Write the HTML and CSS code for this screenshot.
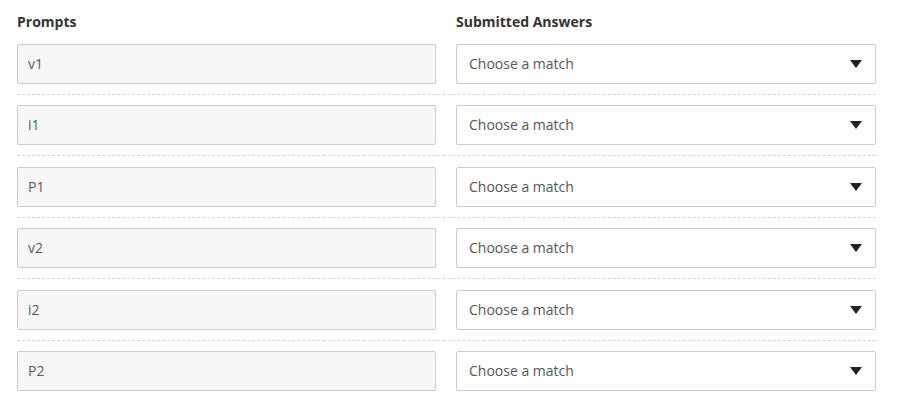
FILE: index.html
```html
<!DOCTYPE html>
<html>
<head>
<meta charset="utf-8">
<link rel="stylesheet" href="styles.css">
</head>
<body>
<div class="match">
  <div class="head">
    <div class="col-title">Prompts</div>
    <div class="col-title">Submitted Answers</div>
  </div>
  <div class="row"><div class="prompt">v1</div><div class="answer"><span>Choose a match</span><svg class="caret" width="12" height="8" viewBox="0 0 12 8"><path d="M0 0H12L6 8Z"/></svg></div></div>
  <div class="row"><div class="prompt">i1</div><div class="answer"><span>Choose a match</span><svg class="caret" width="12" height="8" viewBox="0 0 12 8"><path d="M0 0H12L6 8Z"/></svg></div></div>
  <div class="row"><div class="prompt">P1</div><div class="answer"><span>Choose a match</span><svg class="caret" width="12" height="8" viewBox="0 0 12 8"><path d="M0 0H12L6 8Z"/></svg></div></div>
  <div class="row"><div class="prompt">v2</div><div class="answer"><span>Choose a match</span><svg class="caret" width="12" height="8" viewBox="0 0 12 8"><path d="M0 0H12L6 8Z"/></svg></div></div>
  <div class="row"><div class="prompt">i2</div><div class="answer"><span>Choose a match</span><svg class="caret" width="12" height="8" viewBox="0 0 12 8"><path d="M0 0H12L6 8Z"/></svg></div></div>
  <div class="row last"><div class="prompt">P2</div><div class="answer"><span>Choose a match</span><svg class="caret" width="12" height="8" viewBox="0 0 12 8"><path d="M0 0H12L6 8Z"/></svg></div></div>
</div>
</body>
</html>
```
FILE: styles.css
```css
html, body {
  margin: 0;
  padding: 0;
  background: #fff;
}
body {
  font-family: "Open Sans", "Liberation Sans", sans-serif;
  color: #555;
}
.match {
  width: 859px;
  padding: 12px 0 0 17px;
}
.head {
  display: grid;
  grid-template-columns: 419px 420px;
  column-gap: 20px;
  height: 20px;
  margin-bottom: 12px;
}
.col-title {
  font-size: 14px;
  font-weight: 700;
  line-height: 20px;
  color: #333;
}
.row {
  display: grid;
  grid-template-columns: 419px 420px;
  column-gap: 20px;
  padding-bottom: 10px;
  margin-bottom: 10.4px;
  border-bottom: 1px dashed #d4d4d4;
}
.row.last {
  border-bottom: none;
}
.prompt, .answer {
  box-sizing: border-box;
  height: 40px;
  border: 1px solid #ccc;
  border-radius: 2px;
  font-size: 14px;
  line-height: 38px;
}
.prompt {
  background: #f7f7f7;
  padding-left: 10px;
  color: #5a5a5a;
}
.answer {
  background: #fff;
  padding: 0 13px 0 12px;
  display: flex;
  align-items: center;
  justify-content: space-between;
  color: #555;
}
.caret {
  fill: #222;
  display: block;
}
```
